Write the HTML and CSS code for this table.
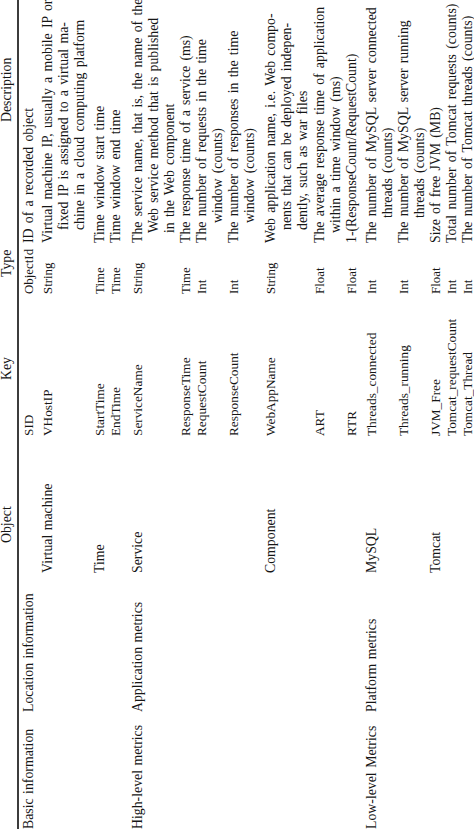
FILE: index.html
```html
<!DOCTYPE html>
<html lang="en">
<head>
<meta charset="utf-8">
<title>Monitoring metrics table</title>
<link rel="stylesheet" href="styles.css">
</head>
<body>
<div class="page">
  <div class="row head">
    <div class="c1"></div>
    <div class="c2"></div>
    <div class="c3 h-object">Object</div>
    <div class="c4 h-key">Key</div>
    <div class="c5 h-type">Type</div>
    <div class="c6 h-desc">Description</div>
  </div>
  <div class="rule"></div>
  <div class="body">
    <div class="row">
      <div class="c1">Basic information</div>
      <div class="c2">Location information</div>
      <div class="c3"></div>
      <div class="c4">SID</div>
      <div class="c5">ObjectId</div>
      <div class="c6"><div class="l">ID of a recorded object</div></div>
    </div>
    <div class="row g3">
      <div class="c1"></div>
      <div class="c2"></div>
      <div class="c3">Virtual machine</div>
      <div class="c4">VHostIP</div>
      <div class="c5">String</div>
      <div class="c6">
        <div class="l">Virtual machine IP, usually a mobile IP or</div>
        <div class="l i13">fixed IP is assigned to a virtual ma-</div>
        <div class="l i13">chine in a cloud computing platform</div>
      </div>
    </div>
    <div class="row g4">
      <div class="c1"></div>
      <div class="c2"></div>
      <div class="c3">Time</div>
      <div class="c4">StartTime</div>
      <div class="c5">Time</div>
      <div class="c6"><div class="l">Time window start time</div></div>
    </div>
    <div class="row">
      <div class="c1"></div>
      <div class="c2"></div>
      <div class="c3"></div>
      <div class="c4">EndTime</div>
      <div class="c5">Time</div>
      <div class="c6"><div class="l">Time window end time</div></div>
    </div>
    <div class="row g6">
      <div class="c1">High-level metrics</div>
      <div class="c2">Application metrics</div>
      <div class="c3">Service</div>
      <div class="c4">ServiceName</div>
      <div class="c5">String</div>
      <div class="c6">
        <div class="l">The service name, that is, the name of the</div>
        <div class="l i10">Web service method that is published</div>
        <div class="l i10">in the Web component</div>
      </div>
    </div>
    <div class="row">
      <div class="c1"></div>
      <div class="c2"></div>
      <div class="c3"></div>
      <div class="c4">ResponseTime</div>
      <div class="c5">Time</div>
      <div class="c6"><div class="l">The response time of a service (ms)</div></div>
    </div>
    <div class="row">
      <div class="c1"></div>
      <div class="c2"></div>
      <div class="c3"></div>
      <div class="c4">RequestCount</div>
      <div class="c5">Int</div>
      <div class="c6">
        <div class="l">The number of requests in the time</div>
        <div class="l i20">window (counts)</div>
      </div>
    </div>
    <div class="row">
      <div class="c1"></div>
      <div class="c2"></div>
      <div class="c3"></div>
      <div class="c4">ResponseCount</div>
      <div class="c5">Int</div>
      <div class="c6">
        <div class="l">The number of responses in the time</div>
        <div class="l i20">window (counts)</div>
      </div>
    </div>
    <div class="row g5">
      <div class="c1"></div>
      <div class="c2"></div>
      <div class="c3">Component</div>
      <div class="c4">WebAppName</div>
      <div class="c5">String</div>
      <div class="c6">
        <div class="l">Web application name, i.e. Web compo-</div>
        <div class="l i13">nents that can be deployed indepen-</div>
        <div class="l i13">dently, such as war files</div>
      </div>
    </div>
    <div class="row g1">
      <div class="c1"></div>
      <div class="c2"></div>
      <div class="c3"></div>
      <div class="c4">ART</div>
      <div class="c5">Float</div>
      <div class="c6">
        <div class="l">The average response time of application</div>
        <div class="l i10">within a time window (ms)</div>
      </div>
    </div>
    <div class="row">
      <div class="c1"></div>
      <div class="c2"></div>
      <div class="c3"></div>
      <div class="c4">RTR</div>
      <div class="c5">Float</div>
      <div class="c6"><div class="l">1-(ResponseCount/RequestCount)</div></div>
    </div>
    <div class="row g4">
      <div class="c1">Low-level Metrics</div>
      <div class="c2">Platform metrics</div>
      <div class="c3">MySQL</div>
      <div class="c4">Threads_connected</div>
      <div class="c5">Int</div>
      <div class="c6">
        <div class="l">The number of MySQL server connected</div>
        <div class="l i25">threads (counts)</div>
      </div>
    </div>
    <div class="row">
      <div class="c1"></div>
      <div class="c2"></div>
      <div class="c3"></div>
      <div class="c4">Threads_running</div>
      <div class="c5">Int</div>
      <div class="c6">
        <div class="l">The number of MySQL server running</div>
        <div class="l i25">threads (counts)</div>
      </div>
    </div>
    <div class="row">
      <div class="c1"></div>
      <div class="c2"></div>
      <div class="c3">Tomcat</div>
      <div class="c4">JVM_Free</div>
      <div class="c5">Float</div>
      <div class="c6"><div class="l">Size of free JVM (MB)</div></div>
    </div>
    <div class="row">
      <div class="c1"></div>
      <div class="c2"></div>
      <div class="c3"></div>
      <div class="c4">Tomcat_requestCount</div>
      <div class="c5">Int</div>
      <div class="c6"><div class="l">Total number of Tomcat requests (counts)</div></div>
    </div>
    <div class="row">
      <div class="c1"></div>
      <div class="c2"></div>
      <div class="c3"></div>
      <div class="c4">Tomcat_Thread</div>
      <div class="c5">Int</div>
      <div class="c6"><div class="l">The number of Tomcat threads (counts)</div></div>
    </div>
  </div>
</div>
</body>
</html>
```

FILE: styles.css
```css
html, body {
  margin: 0;
  padding: 0;
  background: #ffffff;
  overflow: hidden;
}
body {
  width: 474px;
  height: 829px;
}
.page {
  width: 829px;
  height: 474px;
  transform-origin: 0 0;
  transform: translate(0, 829px) rotate(-90deg);
  overflow: hidden;
  font-family: "Liberation Serif", "Times New Roman", serif;
  font-size: 13.8px;
  color: #161616;
  word-spacing: 1px;
}
.row {
  display: grid;
  grid-template-columns: 117px 139px 137px 142px 51px 243px;
  line-height: 16px;
  white-space: nowrap;
}
.body .c4 {
  font-size: 13.3px;
}
.body .c5 {
  font-size: 12.9px;
}
.c6 {
  word-spacing: 1.8px;
}
.head {
  height: 17px;
  line-height: 14px;
}
.head .c6 {
  word-spacing: 1px;
}
.h-object { padding-left: 30px; }
.h-key { padding-left: 56px; }
.h-type { padding-left: 17px; }
.h-desc { padding-left: 121px; }
.rule {
  height: 1.5px;
  background: #3c3c3c;
}
.body {
  padding-top: 2px;
}
.g1 { margin-top: 1px; }
.g3 { margin-top: 3px; }
.g4 { margin-top: 4px; }
.g5 { margin-top: 5px; }
.g6 { margin-top: 6px; }
.i10 { padding-left: 10px; }
.i13 { padding-left: 13px; }
.i20 { padding-left: 20px; }
.i25 { padding-left: 25px; }
```
